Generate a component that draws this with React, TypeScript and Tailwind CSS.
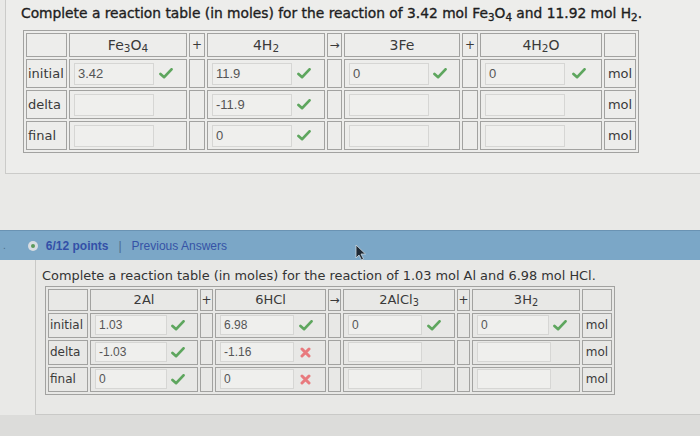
import React from "react";

type Cell = { value?: string; mark?: "ok" | "bad" };

interface TableProps {
  size: "lg" | "sm";
  species: React.ReactNode[];
  rows: { label: string; cells: Cell[] }[];
}

const sizes = {
  lg: {
    table: "w-[616px] text-[14px]",
    cols: ["w-[41px]", "w-[118px]", "w-[16px]", "w-[118px]", "w-[15px]", "w-[116px]", "w-[16px]", "w-[122px]", "w-[32px]"],
    head: "h-[24px]",
    row: "h-[29px]",
    input: "w-[80px] h-[22px] text-[13px]",
    label: "text-[13px]",
  },
  sm: {
    table: "w-[570px] text-[13px]",
    cols: ["w-[40px]", "w-[108px]", "w-[13px]", "w-[111px]", "w-[13px]", "w-[112px]", "w-[13px]", "w-[108px]", "w-[30px]"],
    head: "h-[19px]",
    row: "h-[25px]",
    input: "w-[74px] h-[20px] text-[12px]",
    label: "text-[12px]",
  },
};

function Check() {
  return (
    <svg width="14" height="11" viewBox="0 0 15 12" className="shrink-0">
      <path d="M1.5 6.5 L5.5 10 L13.5 1.5" fill="none" stroke="#5ea65e" strokeWidth="3" strokeLinecap="round" strokeLinejoin="round" />
    </svg>
  );
}

function Cross() {
  return (
    <svg width="11" height="11" viewBox="0 0 11 11" className="shrink-0">
      <path d="M2 2 L9 9 M9 2 L2 9" stroke="#e87a7e" strokeWidth="3" strokeLinecap="round" />
    </svg>
  );
}

function ReactionTable({ size, species, rows }: TableProps) {
  const s = sizes[size];
  const cell = "border border-[#a2a2a0] p-0";
  const signs = ["+", "→", "+"];
  return (
    <table className={`table-fixed border-separate border-spacing-[2px] border border-[#a2a2a0] text-[#3a3a3a] ${s.table}`}>
      <colgroup>
        {s.cols.map((c, i) => (
          <col key={i} className={c} />
        ))}
      </colgroup>
      <tbody>
        <tr className={s.head}>
          <td className={cell} />
          {species.map((sp, i) => (
            <React.Fragment key={i}>
              <td className={`${cell} text-center`}>{sp}</td>
              {i < 3 && <td className={`${cell} text-center text-[12px]`}>{signs[i]}</td>}
            </React.Fragment>
          ))}
          <td className={cell} />
        </tr>
        {rows.map((r) => (
          <tr key={r.label} className={s.row}>
            <td className={`${cell} pl-[1px] ${s.label}`}>{r.label}</td>
            {r.cells.map((c, i) => (
              <React.Fragment key={i}>
                <td className={cell}>
                  <div className="flex items-center pl-[4px] pr-[12px] gap-[4px]">
                    <div className={`flex items-center px-[3px] bg-[#efefed] border border-[#d6d6d4] font-['Liberation_Sans',Arial,sans-serif] text-[#555] ${s.input}`}>
                      {c.value}
                    </div>
                    <div className="flex-1 flex justify-center">
                      {c.mark === "ok" && <Check />}
                      {c.mark === "bad" && <Cross />}
                    </div>
                  </div>
                </td>
                {i < 3 && <td className={cell} />}
              </React.Fragment>
            ))}
            <td className={`${cell} text-center ${s.label}`}>mol</td>
          </tr>
        ))}
      </tbody>
    </table>
  );
}

export default function App() {
  return (
    <div className="relative w-[700px] h-[436px] overflow-hidden bg-[#e9e9e7] font-['DejaVu_Sans',Verdana,sans-serif]">
      {/* first question */}
      <div className="ml-[5px] h-[174px] border-l border-b border-[#cbcbc9] bg-[#ededeb] pl-[15px] pt-[4px]">
        <h2 className="whitespace-nowrap text-[13.8px] text-[#1e1e1e] [-webkit-text-stroke:0.35px_#1e1e1e] leading-[18px]">
          Complete a reaction table (in moles) for the reaction of 3.42 mol Fe<sub>3</sub>O<sub>4</sub> and 11.92 mol H<sub>2</sub>.
        </h2>
        <div className="mt-[8px] ml-[2px]">
          <ReactionTable
            size="lg"
            species={[
              <>Fe<sub>3</sub>O<sub>4</sub></>,
              <>4H<sub>2</sub></>,
              <>3Fe</>,
              <>4H<sub>2</sub>O</>,
            ]}
            rows={[
              { label: "initial", cells: [{ value: "3.42", mark: "ok" }, { value: "11.9", mark: "ok" }, { value: "0", mark: "ok" }, { value: "0", mark: "ok" }] },
              { label: "delta", cells: [{}, { value: "-11.9", mark: "ok" }, {}, {}] },
              { label: "final", cells: [{}, { value: "0", mark: "ok" }, {}, {}] },
            ]}
          />
        </div>
      </div>

      <div className="h-[56px]" />

      {/* points bar */}
      <div className="h-[30px] bg-[#7ba7c7] border-t border-[#6a93b3] flex items-center pl-[3px] text-[12px] font-['Liberation_Sans',Arial,sans-serif]">
        <span className="text-[#4b6f8c] text-[10px] mr-[22px]">.</span>
        <span className="w-[10px] h-[10px] rounded-full bg-[#d8dde2] flex items-center justify-center mr-[8px]">
          <span className="w-[4px] h-[4px] rounded-full bg-[#5c9a5c]" />
        </span>
        <span className="font-bold text-[#3350a8]">6/12 points</span>
        <span className="text-[#4a6a90] mx-[10px]">|</span>
        <span className="text-[#3553a6]">Previous Answers</span>
      </div>

      {/* second question */}
      <div className="ml-[35px] h-[155px] border-l border-b border-[#c9c9c7] bg-[#e8e8e6] pl-[6px] pt-[7px]">
        <h2 className="whitespace-nowrap text-[12.9px] text-[#333] leading-[17px]">
          Complete a reaction table (in moles) for the reaction of 1.03 mol Al and 6.98 mol HCl.
        </h2>
        <div className="mt-[2px] ml-[3px]">
          <ReactionTable
            size="sm"
            species={[
              <>2Al</>,
              <>6HCl</>,
              <>2AlCl<sub>3</sub></>,
              <>3H<sub>2</sub></>,
            ]}
            rows={[
              { label: "initial", cells: [{ value: "1.03", mark: "ok" }, { value: "6.98", mark: "ok" }, { value: "0", mark: "ok" }, { value: "0", mark: "ok" }] },
              { label: "delta", cells: [{ value: "-1.03", mark: "ok" }, { value: "-1.16", mark: "bad" }, {}, {}] },
              { label: "final", cells: [{ value: "0", mark: "ok" }, { value: "0", mark: "bad" }, {}, {}] },
            ]}
          />
        </div>
      </div>

      <div className="h-[40px] bg-[#dcdcda]" />

      {/* mouse pointer */}
      <svg className="absolute left-[355px] top-[244px]" width="12" height="17" viewBox="0 0 12 17">
        <path d="M1 1 L1 14 L4 11 L6.5 16 L8.5 15 L6 10 L10.5 10 Z" fill="#1f2a35" stroke="#cfd8e0" strokeWidth="0.8" />
      </svg>
    </div>
  );
}
